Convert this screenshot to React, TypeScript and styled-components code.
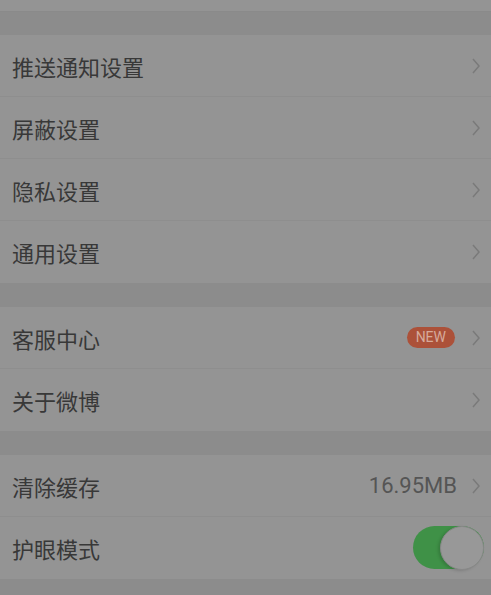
import styled, { createGlobalStyle } from "styled-components";

const Global = createGlobalStyle`
  html, body {
    margin: 0;
    padding: 0;
    background: #8c8c8c;
  }
  body {
    font-family: "Noto Sans CJK SC", "Liberation Sans", sans-serif;
    overflow: hidden;
  }
`;

const Page = styled.div`
  width: 491px;
  height: 595px;
  background: #8c8c8c;
  overflow: hidden;
`;

const TopStub = styled.div`
  height: 11px;
  background: #949494;
  border-bottom: 1px solid #8a8a8a;
`;

const Group = styled.div`
  margin-top: 23px;
  background: #949494;
  & + & {
    margin-top: 24px;
  }
`;

const Row = styled.div<{ $last?: boolean }>`
  height: 61px;
  display: flex;
  align-items: center;
  padding: 0 12px;
  border-bottom: 1px solid ${(p) => (p.$last ? "#949494" : "#8e8e8e")};
`;

const Label = styled.span`
  flex: 1;
  font-size: 22px;
  color: #383838;
`;

const Value = styled.span`
  font-family: Roboto, "Liberation Sans", sans-serif;
  font-size: 22px;
  color: #555;
  margin-right: 14px;
`;

const Badge = styled.span`
  font-family: Roboto, "Liberation Sans", sans-serif;
  font-size: 14px;
  line-height: 21px;
  height: 21px;
  padding: 0 9px;
  border-radius: 11px;
  background: #ac5139;
  color: #d6aa9b;
  margin-right: 16px;
`;

const Chevron = styled.svg`
  width: 10px;
  height: 18px;
  margin-right: -2px;
  flex-shrink: 0;
`;

const Toggle = styled.div<{ $on: boolean }>`
  position: relative;
  width: 71px;
  height: 43px;
  margin-right: -5px;
  border-radius: 22px;
  background: ${(p) => (p.$on ? "#3f9147" : "#8a8a8a")};
`;

const Knob = styled.div`
  position: absolute;
  top: 0;
  right: 0;
  width: 42px;
  height: 42px;
  border-radius: 50%;
  background: #989898;
  border: 1px solid #888;
  box-shadow: -2px 1px 3px rgba(0, 0, 0, 0.15);
`;

function Arrow() {
  return (
    <Chevron viewBox="0 0 10 18">
      <path d="M2 2 L8 9 L2 16" fill="none" stroke="#7a7a7a" strokeWidth="1.5" />
    </Chevron>
  );
}

const groups = [
  [
    { label: "推送通知设置" },
    { label: "屏蔽设置" },
    { label: "隐私设置" },
    { label: "通用设置" },
  ],
  [{ label: "客服中心", badge: "NEW" }, { label: "关于微博" }],
];

export default function App() {
  return (
    <Page>
      <Global />
      <TopStub />
      {groups.map((items, gi) => (
        <Group key={gi}>
          {items.map((it, i) => (
            <Row key={it.label} $last={i === items.length - 1}>
              <Label>{it.label}</Label>
              {"badge" in it && it.badge && <Badge>{it.badge}</Badge>}
              <Arrow />
            </Row>
          ))}
        </Group>
      ))}
      <Group>
        <Row>
          <Label>清除缓存</Label>
          <Value>16.95MB</Value>
          <Arrow />
        </Row>
        <Row $last>
          <Label>护眼模式</Label>
          <Toggle $on>
            <Knob />
          </Toggle>
        </Row>
      </Group>
    </Page>
  );
}
